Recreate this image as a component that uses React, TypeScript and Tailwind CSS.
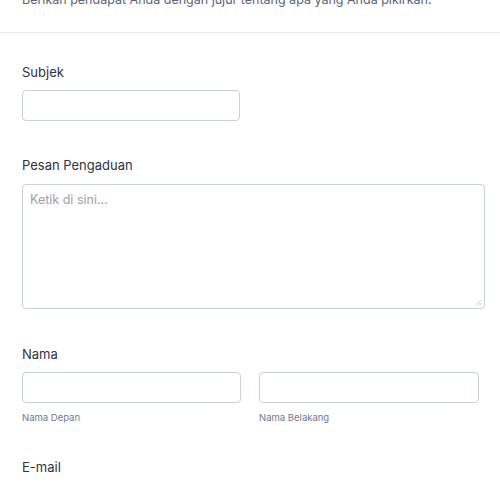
import React from "react";

const Label: React.FC<{ children: React.ReactNode }> = ({ children }) => (
  <label className="block text-[13px] leading-[16px] text-[#2c3345] font-normal">{children}</label>
);

const inputCls =
  "block w-full h-[31px] rounded-[4px] border border-[#c8cedb] px-2 text-[12.5px] outline-none";

export default function App() {
  return (
    <div className="w-[500px] h-[484px] overflow-hidden bg-white font-['Inter',sans-serif]">
      {/* Header description (scrolled) */}
      <div className="px-[22px] h-[32px] overflow-hidden">
        <p className="mt-[-8px] text-[12.5px] leading-[16px] text-[#57647e]">
          Berikan pendapat Anda dengan jujur tentang apa yang Anda pikirkan.
        </p>
      </div>
      <div className="h-px bg-[#e6e8f2]" />

      <div className="pl-[22px] pr-[15px]">
        {/* Subjek */}
        <div className="pt-[31px]">
          <Label>Subjek</Label>
          <div className="mt-[10px] w-[218px]">
            <input type="text" className={inputCls} />
          </div>
        </div>

        {/* Pesan */}
        <div className="pt-[36px]">
          <Label>Pesan Pengaduan</Label>
          <div className="relative mt-[11px] w-[463px]">
            <textarea
              placeholder="Ketik di sini..."
              className="block w-full h-[125px] resize-none rounded-[4px] border border-[#c8cedb] px-[7px] py-[7px] text-[12.5px] leading-[16px] text-[#2c3345] placeholder:text-[#9aa1b0] outline-none"
            />
            <svg className="absolute right-[3px] bottom-[3px]" width="7" height="7" viewBox="0 0 7 7">
              <path d="M6.5 1 L1 6.5 M6.5 4 L4 6.5" stroke="#b9bec8" strokeWidth="0.9" fill="none" />
            </svg>
          </div>
        </div>

        {/* Nama */}
        <div className="pt-[37px]">
          <Label>Nama</Label>
          <div className="mt-[10px] flex gap-[18px] w-[457px]">
            <div className="w-[219px]">
              <input type="text" className={inputCls} />
              <span className="block mt-[8px] text-[9.5px] leading-[13px] text-[#6f7a90]">Nama Depan</span>
            </div>
            <div className="w-[220px]">
              <input type="text" className={inputCls} />
              <span className="block mt-[8px] text-[9.5px] leading-[13px] text-[#6f7a90]">Nama Belakang</span>
            </div>
          </div>
        </div>

        {/* E-mail */}
        <div className="pt-[35px]">
          <Label>E-mail</Label>
        </div>
      </div>
    </div>
  );
}
